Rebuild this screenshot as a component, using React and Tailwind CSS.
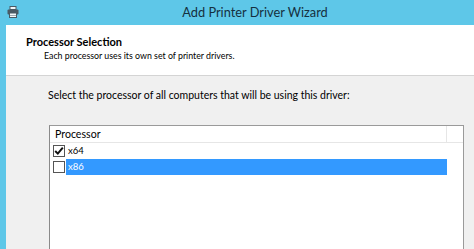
import React from "react";

const font = { fontFamily: 'Lato, "Noto Sans", sans-serif' };

const PrinterIcon = () => (
  <svg width="12" height="12" viewBox="0 0 12 12">
    <rect x="3" y="0.5" width="6" height="3" fill="#f4f8fa" stroke="#4a5a64" strokeWidth="1" />
    <rect x="0.5" y="3.5" width="11" height="5" rx="1" fill="#4a5a64" />
    <rect x="2.5" y="7" width="7" height="4.5" fill="#f4f8fa" stroke="#4a5a64" strokeWidth="1" />
    <rect x="3.5" y="9" width="1" height="1" fill="#4a5a64" />
    <rect x="5.5" y="9" width="1" height="1" fill="#4a5a64" />
    <rect x="7.5" y="9" width="1" height="1" fill="#4a5a64" />
  </svg>
);

const Checkbox = ({ checked }) => (
  <div className="flex h-[12px] w-[12px] items-center justify-center border border-[#555] bg-white">
    {checked && (
      <svg width="10" height="10" viewBox="0 0 10 10">
        <path d="M1.2 5 L3.8 7.6 L8.8 1.6" fill="none" stroke="#111" strokeWidth="2" />
      </svg>
    )}
  </div>
);

const rows = [
  { name: "x64", checked: true, selected: false },
  { name: "x86", checked: false, selected: true },
];

export default function App() {
  return (
    <div className="flex h-[249px] w-[474px] flex-col overflow-hidden bg-[#5ec7e8]" style={font}>
      <div className="relative flex h-[25px] shrink-0 items-center">
        <div className="absolute left-[7px] top-[6px]">
          <PrinterIcon />
        </div>
        <div className="flex-1 pl-[36px] text-center text-[12.8px] leading-none text-[#15303f]">
          Add Printer Driver Wizard
        </div>
      </div>

      <div className="ml-[6px] flex flex-1 flex-col">
        <div className="h-[51px] shrink-0 border-b border-[#d4d4d4] bg-white pl-[20px] pt-[10px]">
          <div className="text-[11px] font-bold leading-[14px] text-black">
            Processor Selection
          </div>
          <div className="pl-[18px] text-[8.8px] leading-[13px] text-black">
            Each processor uses its own set of printer drivers.
          </div>
        </div>

        <div className="flex-1 bg-[#f0f0f0] pl-[42px] pt-[12px]">
          <div className="text-[10.5px] leading-[15px] text-black">
            Select the processor of all computers that will be using this driver:
          </div>

          <div className="ml-[1px] mt-[22px] h-[140px] w-[415px] border border-[#9a9a9a] border-l-[#8a8a8a] bg-white">
            <div className="flex h-[17px] border-b border-[#e6e6e6]">
              <div className="w-[397px] border-r border-[#e6e6e6] pl-[5px] text-[10.6px] leading-[17px] text-black">
                Processor
              </div>
              <div className="flex-1" />
            </div>
            {rows.map((r) => (
              <div key={r.name} className="flex h-[16px] items-center">
                <div className="flex w-[15px] justify-end">
                  <Checkbox checked={r.checked} />
                </div>
                <div
                  className={
                    r.selected
                      ? "ml-[1px] h-[16px] w-[381px] bg-[#3399ff] pl-[2px] text-[9.5px] leading-[16px] text-white"
                      : "ml-[1px] h-[16px] w-[381px] pl-[2px] text-[9.5px] leading-[16px] text-black"
                  }
                >
                  {r.name}
                </div>
              </div>
            ))}
          </div>
        </div>
      </div>
    </div>
  );
}
